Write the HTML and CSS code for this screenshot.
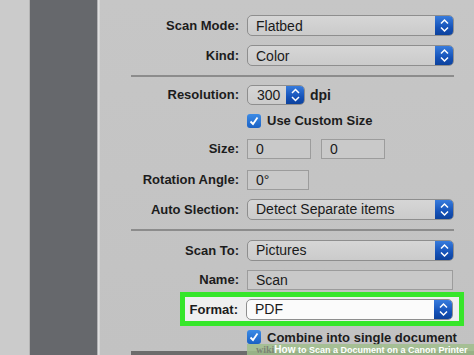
FILE: index.html
```html
<!DOCTYPE html>
<html>
<head>
<meta charset="utf-8">
<link rel="stylesheet" href="styles.css">
</head>
<body>
<div class="app">
  <div class="strip"></div>
  <div class="sidebar"></div>
  <div class="divider"></div>
  <div class="panel">
    <div class="row r1">
      <div class="label">Scan Mode:</div>
      <div class="select"><span class="val">Flatbed</span><span class="stepper"><svg width="19" height="21" viewBox="0 0 19 21"><path d="M6 8.5 L9.5 5 L13 8.5 M6 12.5 L9.5 16 L13 12.5" fill="none" stroke="#fff" stroke-width="1.5"/></svg></span></div>
    </div>
    <div class="row r2">
      <div class="label">Kind:</div>
      <div class="select"><span class="val">Color</span><span class="stepper"><svg width="19" height="21" viewBox="0 0 19 21"><path d="M6 8.5 L9.5 5 L13 8.5 M6 12.5 L9.5 16 L13 12.5" fill="none" stroke="#fff" stroke-width="1.5"/></svg></span></div>
    </div>
    <div class="sep s1"></div>
    <div class="row r3">
      <div class="label">Resolution:</div>
      <div class="select small"><span class="val">300</span><span class="stepper"><svg width="19" height="20" viewBox="0 0 19 20"><path d="M6 8 L9.5 4.5 L13 8 M6 12 L9.5 15.5 L13 12" fill="none" stroke="#fff" stroke-width="1.5"/></svg></span></div>
      <div class="unit">dpi</div>
    </div>
    <div class="row r4">
      <div class="label"></div>
      <div class="check"><svg width="14" height="14" viewBox="0 0 14 14"><path d="M3.5 7.5 L6 10 L10.5 3.5" fill="none" stroke="#fff" stroke-width="1.8"/></svg></div>
      <div class="checklabel">Use Custom Size</div>
    </div>
    <div class="row r5">
      <div class="label">Size:</div>
      <div class="input w63">0</div>
      <div class="input w63 second">0</div>
    </div>
    <div class="row r6">
      <div class="label">Rotation Angle:</div>
      <div class="input w62">0°</div>
    </div>
    <div class="row r7">
      <div class="label">Auto Slection:</div>
      <div class="select"><span class="val">Detect Separate items</span><span class="stepper"><svg width="19" height="21" viewBox="0 0 19 21"><path d="M6 8.5 L9.5 5 L13 8.5 M6 12.5 L9.5 16 L13 12.5" fill="none" stroke="#fff" stroke-width="1.5"/></svg></span></div>
    </div>
    <div class="sep s2"></div>
    <div class="row r8">
      <div class="label">Scan To:</div>
      <div class="select"><span class="val">Pictures</span><span class="stepper"><svg width="19" height="21" viewBox="0 0 19 21"><path d="M6 8.5 L9.5 5 L13 8.5 M6 12.5 L9.5 16 L13 12.5" fill="none" stroke="#fff" stroke-width="1.5"/></svg></span></div>
    </div>
    <div class="row r9">
      <div class="label">Name:</div>
      <div class="input wide">Scan</div>
    </div>
    <div class="highlight">
      <div class="label hl">Format:</div>
      <div class="select white"><span class="val">PDF</span><span class="stepper"><svg width="19" height="21" viewBox="0 0 19 21"><path d="M6 8.5 L9.5 5 L13 8.5 M6 12.5 L9.5 16 L13 12.5" fill="none" stroke="#fff" stroke-width="1.5"/></svg></span></div>
    </div>
    <div class="row r10">
      <div class="label"></div>
      <div class="check"><svg width="14" height="14" viewBox="0 0 14 14"><path d="M3.5 7.5 L6 10 L10.5 3.5" fill="none" stroke="#fff" stroke-width="1.8"/></svg></div>
      <div class="checklabel">Combine into single document</div>
    </div>
    <div class="bottombar"></div>
  </div>
</div>
<div class="watermark"><span class="wiki">wiki</span><span class="how">How</span> to Scan a Document on a Canon Printer</div>
</body>
</html>
```
FILE: styles.css
```css
html, body {
  margin: 0;
  padding: 0;
  width: 474px;
  height: 355px;
  overflow: hidden;
  background: #c3c3c3;
  font-family: "Liberation Sans", Arial, sans-serif;
}
.app {
  display: flex;
  width: 474px;
  height: 355px;
}
.strip {
  width: 29px;
  background: #cbcbcb;
  border-right: 1px solid #b4b4b4;
}
.sidebar {
  width: 67px;
  background: #66686c;
}
.divider {
  width: 3px;
  background: linear-gradient(to right, #9a9a9e, #dedede, #d0d0d0);
}
.panel {
  flex: 1;
  display: flex;
  flex-direction: column;
  padding-top: 15px;
  background: linear-gradient(#c6c6c6, #c2c2c2);
}
.row {
  display: flex;
  align-items: center;
  height: 21px;
}
.label {
  width: 139px;
  flex: none;
  margin-right: 8px;
  text-align: right;
  font-weight: bold;
  font-size: 13px;
  color: #1c1c1c;
}
.r2 { margin-top: 9px; }
.r3 { margin-top: 8px; height: 20px; }
.r4 { margin-top: 9px; height: 14px; }
.r5 { margin-top: 11px; height: 20px; }
.r6 { margin-top: 11px; height: 20px; }
.r7 { margin-top: 9px; }
.r8 { margin-top: 9px; }
.r9 { margin-top: 9px; height: 20px; }
.r10 { margin-top: 4px; height: 14px; }
.sep {
  height: 2px;
  margin-top: 9px;
  margin-left: 31px;
  margin-right: 20px;
  background: #8c8c8c;
}
.select {
  width: 207px;
  height: 21px;
  box-sizing: border-box;
  border: 1px solid #8e8e8e;
  border-radius: 5px;
  background: linear-gradient(#d6d6d6, #cbcbcb);
  display: flex;
  align-items: center;
  overflow: hidden;
}
.select .val {
  flex: 1;
  padding-left: 8px;
  font-size: 14px;
  color: #1a1a1a;
}
.stepper {
  width: 19px;
  height: 21px;
  flex: none;
  background: linear-gradient(#3a7fe0, #1552b8 60%, #0b3f98);
  display: flex;
  align-items: center;
  justify-content: center;
  margin-right: -1px;
}
.select.small {
  width: 58px;
  height: 20px;
}
.select.small .stepper { height: 20px; }
.select.small .val { padding-left: 9px; }
.select.white {
  background: #fbfbfb;
}
.unit {
  margin-left: 5px;
  font-weight: bold;
  font-size: 14px;
  color: #1c1c1c;
}
.check {
  width: 14px;
  height: 14px;
  border-radius: 3px;
  background: linear-gradient(#3c8be6, #1a61c4);
  flex: none;
  display: flex;
}
.checklabel {
  margin-left: 6px;
  font-weight: bold;
  font-size: 13px;
  color: #1c1c1c;
}
.input {
  height: 20px;
  box-sizing: border-box;
  border: 1px solid #9c9c9c;
  background: #c9c9c9;
  font-size: 14px;
  color: #1a1a1a;
  padding-left: 8px;
  line-height: 18px;
}
.w63 { width: 64px; }
.w62 { width: 62px; }
.second { margin-left: 10px; }
.wide { width: 206px; }
.highlight {
  margin-top: 2px;
  margin-left: 80px;
  margin-right: 10px;
  height: 35px;
  box-sizing: border-box;
  border: 5px solid #36e62a;
  background: #efefef;
  display: flex;
  align-items: center;
}
.label.hl {
  width: 53px;
  margin-right: 8px;
}
.bottombar {
  margin-top: 7px;
  margin-left: 31px;
  height: 4px;
  background: #6c6c6c;
}
.watermark {
  position: absolute;
  left: 247px;
  top: 344px;
  width: 227px;
  height: 11px;
  background: rgba(160, 190, 140, 0.85);
  font-size: 9px;
  font-weight: bold;
  color: #fff;
  line-height: 11px;
  padding-left: 9px;
  box-sizing: border-box;
  white-space: nowrap;
  overflow: hidden;
}
.watermark .wiki {
  font-family: "Liberation Serif", serif;
  color: #7c8474;
  font-size: 10px;
}
.watermark .how {
  font-size: 10px;
}
```
